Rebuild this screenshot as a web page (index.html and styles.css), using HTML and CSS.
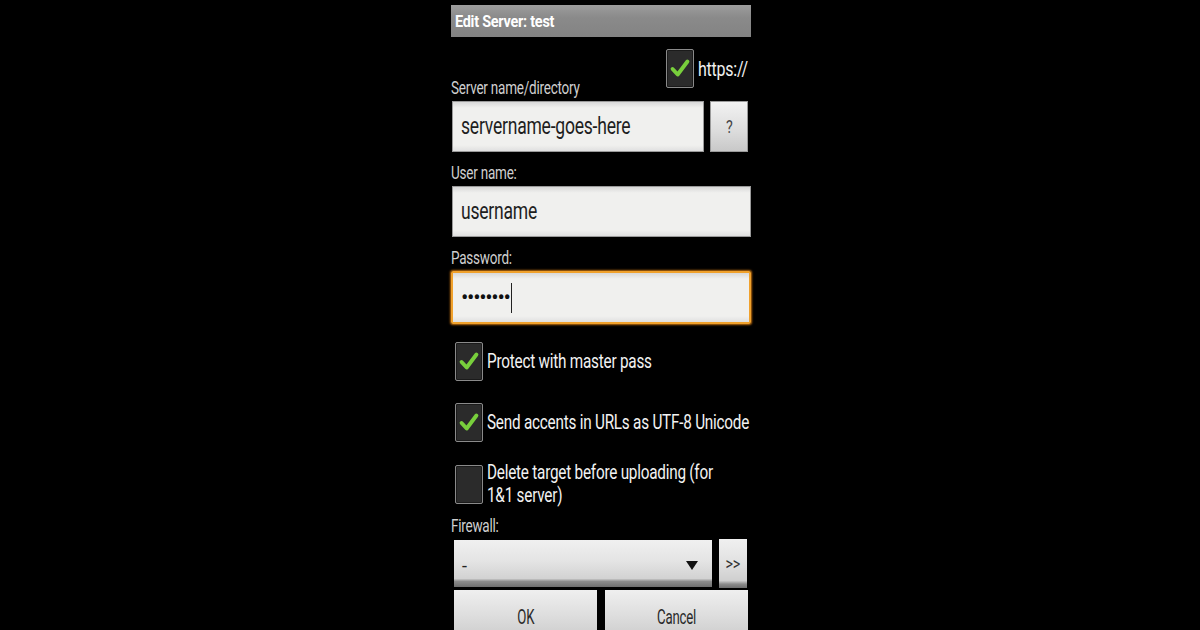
FILE: index.html
```html
<!DOCTYPE html>
<html>
<head>
<meta charset="utf-8">
<link rel="stylesheet" href="styles.css">
</head>
<body>
<div class="screen">
  <div class="title"><span class="sq">Edit Server: test</span></div>
  <div class="head-row">
    <div class="label label-server"><span class="sq">Server name/directory</span></div>
    <div class="https">
      <span class="cb checked"><svg viewBox="0 0 28 39"><path d="M6 20 L11.5 26 L22 12" /></svg></span>
      <span class="https-text sq">https://</span>
    </div>
  </div>
  <div class="field-row">
    <div class="input input-short"><span class="sq">servername-goes-here</span></div>
    <div class="qbtn"><span class="sq">?</span></div>
  </div>
  <div class="label label-block"><span class="sq">User name:</span></div>
  <div class="input"><span class="sq">username</span></div>
  <div class="label label-block"><span class="sq">Password:</span></div>
  <div class="input input-focus"><span class="dots">••••••••</span><span class="caret"></span></div>

  <div class="check-row first">
    <span class="cb checked"><svg viewBox="0 0 28 39"><path d="M6 20 L11.5 26 L22 12" /></svg></span>
    <span class="check-text sq">Protect with master pass</span>
  </div>
  <div class="check-row">
    <span class="cb checked"><svg viewBox="0 0 28 39"><path d="M6 20 L11.5 26 L22 12" /></svg></span>
    <span class="check-text sq">Send accents in URLs as UTF-8 Unicode</span>
  </div>
  <div class="check-row multi">
    <span class="cb"></span>
    <span class="check-text sq">Delete target before uploading (for<br>1&amp;1 server)</span>
  </div>

  <div class="label label-fw"><span class="sq">Firewall:</span></div>
  <div class="spin-row">
    <div class="spinner"><span class="spin-val">-</span><span class="spin-arrow"></span></div>
    <div class="more"><span class="sq">&gt;&gt;</span></div>
  </div>
  <div class="btn-row">
    <div class="btn"><span class="sq">OK</span></div>
    <div class="btn"><span class="sq">Cancel</span></div>
  </div>
</div>
</body>
</html>
```

FILE: styles.css
```css
html, body {
  margin: 0;
  padding: 0;
  background: #000;
  height: 100%;
  overflow: hidden;
}
body {
  font-family: Roboto, "Noto Sans", sans-serif;
}
.screen {
  width: 300px;
  margin-left: calc(50% - 149px);
  display: flex;
  flex-direction: column;
}
/* the source screen is horizontally squeezed: narrow the glyphs */
.sq {
  display: inline-block;
  white-space: nowrap;
  transform-origin: left center;
  letter-spacing: -0.3px;
}
.title {
  margin-top: 5px;
  height: 32px;
  line-height: 32px;
  background: linear-gradient(#9c9c9c, #8a8a8a 40%, #838383);
  color: #fff;
  font-weight: bold;
  font-size: 17px;
  padding-left: 4px;
}
.title .sq {
  transform: scaleX(0.85);
}
.head-row {
  margin-top: 12px;
  height: 52px;
  display: flex;
  justify-content: space-between;
}
.label {
  color: #cfcfcf;
  font-size: 18px;
  line-height: 20px;
}
.label .sq {
  transform: scaleX(0.75);
}
.label-server {
  align-self: flex-end;
  margin-bottom: 3px;
}
.https {
  display: flex;
  align-items: center;
  align-self: flex-start;
  height: 39px;
  margin-right: 3px;
  width: 82px;
  flex-shrink: 0;
}
.https-text {
  color: #f0f0f0;
  font-size: 20px;
  margin-left: 4px;
  transform: scaleX(0.8);
}
.cb {
  width: 26px;
  height: 37px;
  border: 1px solid #8a8a8a;
  border-radius: 2px;
  background: #2b2b2b;
  box-shadow: inset 0 0 0 1px #1a1a1a;
  display: flex;
  flex-shrink: 0;
}
.cb svg {
  width: 26px;
  height: 37px;
}
.cb path {
  fill: none;
  stroke: #78cf3c;
  stroke-width: 4.2;
  stroke-linecap: round;
  stroke-linejoin: round;
}
.field-row {
  display: flex;
  gap: 6px;
  height: 51px;
}
.input {
  height: 49px;
  margin-left: 1px;
  border: 1px solid #9a9a9a;
  background: linear-gradient(#d8d8d8, #f0f0ee 12%, #f0f0ee 88%, #e0e0e0);
  color: #1e1e1e;
  font-size: 24px;
  line-height: 49px;
  padding-left: 8px;
  display: flex;
  align-items: center;
  overflow: hidden;
}
.input .sq {
  transform: scaleX(0.73);
}
.input-short {
  width: 242px;
  flex-shrink: 0;
}
.qbtn {
  width: 36px;
  height: 49px;
  border: 1px solid #9a9a9a;
  background: linear-gradient(#f2f2f2, #dcdcdc 60%, #c8c8c8);
  color: #444;
  font-size: 19px;
  display: flex;
  align-items: center;
  justify-content: center;
}
.qbtn .sq {
  transform: scaleX(0.75);
  transform-origin: center;
}
.label-block {
  padding-top: 11px;
  height: 23px;
}
.input-focus {
  height: 49px;
  margin-left: 0;
  border: 2px solid #f0a12c;
  box-shadow: 0 0 2px 1px #b86a10;
  border-radius: 2px;
  padding-left: 8px;
}
.dots {
  font-size: 22px;
  letter-spacing: -1.35px;
  color: #111;
}
.caret {
  width: 1px;
  height: 30px;
  background: #222;
  margin-left: 1px;
}
.check-row {
  display: flex;
  align-items: center;
  margin-left: 4px;
  margin-top: 22px;
}
.check-row.first {
  margin-top: 18px;
}
.check-row.multi {
  margin-top: 19px;
}
.check-text {
  color: #f2f2f2;
  font-size: 20px;
  line-height: 23px;
  margin-left: 4px;
  transform: scaleX(0.765);
}
.label-fw {
  margin-top: 9px;
  height: 23px;
}
.spin-row {
  display: flex;
  align-items: center;
  height: 49px;
  margin-left: 3px;
}
.spinner {
  width: 258px;
  height: 47px;
  background: linear-gradient(#f0f0f0, #e4e4e4 45%, #d2d2d2 82%, #8c8c8c 88%, #6e6e6e);
  display: flex;
  align-items: center;
  justify-content: space-between;
  box-sizing: border-box;
  padding: 4px 14px 0 8px;
}
.spin-val {
  color: #222;
  font-size: 18px;
}
.spin-arrow {
  width: 0;
  height: 0;
  border-left: 6px solid transparent;
  border-right: 6px solid transparent;
  border-top: 9px solid #111;
}
.more {
  margin-left: 7px;
  width: 28px;
  height: 49px;
  background: linear-gradient(#f0f0f0, #e2e2e2 45%, #cfcfcf 85%, #8c8c8c 92%, #6e6e6e);
  color: #333;
  font-size: 19px;
  display: flex;
  align-items: center;
  justify-content: center;
}
.more .sq {
  transform: scaleX(0.75);
  transform-origin: center;
}
.btn-row {
  display: flex;
  gap: 8px;
  margin-left: 3px;
  margin-top: 2px;
}
.btn {
  width: 143px;
  height: 50px;
  background: linear-gradient(#efefef, #dedede 50%, #cbcbcb);
  color: #2a2a2a;
  font-size: 20px;
  display: flex;
  align-items: center;
  justify-content: center;
  padding-top: 4px;
  box-sizing: border-box;
}
.btn .sq {
  transform: scaleX(0.66);
  transform-origin: center;
}
```
